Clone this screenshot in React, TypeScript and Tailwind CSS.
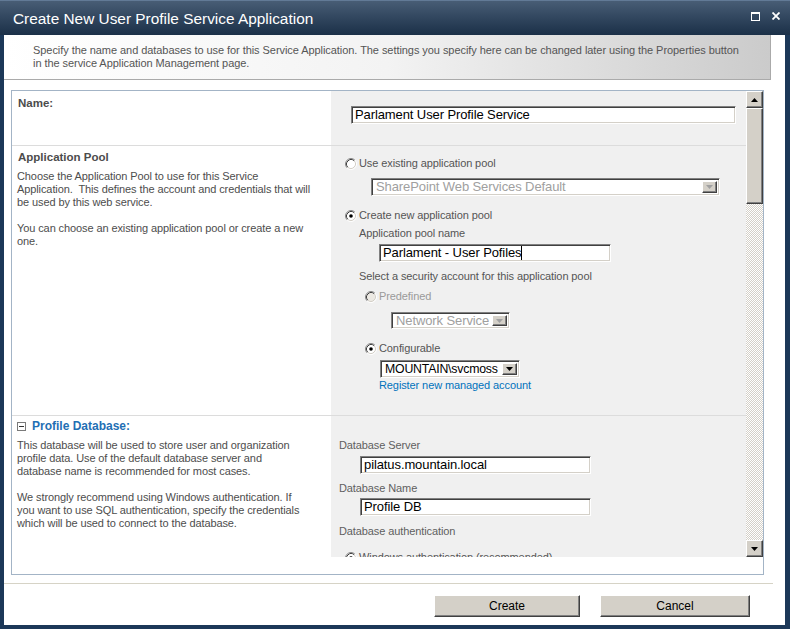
import React from "react";

const sans = "font-['Liberation_Sans',Arial,sans-serif]";

function Radio({ checked = false, disabled = false }: { checked?: boolean; disabled?: boolean }) {
  return (
    <svg width="12" height="12" viewBox="0 0 12 12" className="shrink-0">
      <circle cx="6" cy="6" r="4.5" fill={disabled ? "#ece9e3" : "#ffffff"} />
      <path d="M2.11 9.89 A5.5 5.5 0 0 1 9.89 2.11" fill="none" stroke="#8a8a8a" strokeWidth="1" />
      <path d="M9.89 2.11 A5.5 5.5 0 0 1 2.11 9.89" fill="none" stroke="#ffffff" strokeWidth="1" />
      <path d="M2.82 9.18 A4.5 4.5 0 0 1 9.18 2.82" fill="none" stroke="#404040" strokeWidth="1" />
      <path d="M9.18 2.82 A4.5 4.5 0 0 1 2.82 9.18" fill="none" stroke="#d4d0c8" strokeWidth="1" />
      {checked && <circle cx="6" cy="6" r="1.8" fill={disabled ? "#8a8a8a" : "#000000"} />}
    </svg>
  );
}

function ArrowDown({ color = "#000" }: { color?: string }) {
  return (
    <svg width="7" height="4" viewBox="0 0 7 4">
      <path d="M0 0 H7 L3.5 4 Z" fill={color} />
    </svg>
  );
}

function ArrowUp({ color = "#000" }: { color?: string }) {
  return (
    <svg width="7" height="4" viewBox="0 0 7 4">
      <path d="M0 4 H7 L3.5 0 Z" fill={color} />
    </svg>
  );
}

const inset =
  "border border-t-[#808080] border-l-[#808080] border-b-white border-r-white shadow-[inset_1px_1px_#404040,inset_-1px_-1px_#d4d0c8]";
const raised =
  "border border-t-white border-l-white border-b-[#404040] border-r-[#404040] shadow-[inset_-1px_-1px_#808080] bg-[#d4d0c8]";

function TextBox({ value, className, caret = false }: { value: string; className: string; caret?: boolean }) {
  return (
    <div className={`${inset} bg-white flex items-center pl-[3px] text-[13px] leading-[14px] text-black ${className}`}>
      <span className="whitespace-nowrap">{value}</span>
      {caret && <span className="w-px h-[14px] bg-black" />}
    </div>
  );
}

function Select({
  value,
  className,
  textClass = "",
  disabled = false,
}: {
  value: string;
  className: string;
  textClass?: string;
  disabled?: boolean;
}) {
  return (
    <div className={`${inset} bg-white flex items-stretch p-[2px] text-[13px] leading-[14px] ${className}`}>
      <span
        className={`flex-1 flex items-center pl-[2px] whitespace-nowrap ${
          disabled ? "text-[#a0a0a0]" : "text-black"
        } ${textClass}`}
      >
        {value}
      </span>
      <span className={`${raised} w-[15px] shrink-0 flex items-center justify-center`}>
        <ArrowDown color={disabled ? "#a0a0a0" : "#000"} />
      </span>
    </div>
  );
}

function Scrollbar() {
  return (
    <div className="w-[17px] h-full flex flex-col">
      <div className={`${raised} h-[17px] flex items-center justify-center`}>
        <ArrowUp />
      </div>
      <div className={`${raised} h-[96px]`} />
      <div className="flex-1 bg-[image:repeating-conic-gradient(#d4d0c8_0%_25%,#ffffff_0%_50%)] bg-[length:2px_2px]" />
      <div className={`${raised} h-[17px] flex items-center justify-center`}>
        <ArrowDown />
      </div>
    </div>
  );
}

export default function App() {
  return (
    <div className={`w-[790px] h-[629px] bg-[#1c3858] flex flex-col overflow-hidden ${sans}`}>
      {/* window caption */}
      <div className="h-[35px] shrink-0 flex items-center pl-[13px] pr-[10px] bg-gradient-to-b from-[#485d75] to-[#1b3048] border-t border-[#627a96]">
        <span className="text-white text-[15.4px] leading-none pt-[1px]">Create New User Profile Service Application</span>
        <div className="ml-auto flex items-center gap-[12px] pb-[4px]">
          <svg width="9" height="9" viewBox="0 0 9 9">
            <rect x="0.5" y="0.5" width="8" height="8" fill="none" stroke="#fff" />
            <rect x="0" y="0" width="9" height="2" fill="#fff" />
          </svg>
          <svg width="8" height="8" viewBox="0 0 8 8">
            <path d="M0.5 0.5 L7.5 7.5 M7.5 0.5 L0.5 7.5" stroke="#fff" strokeWidth="1.8" />
          </svg>
        </div>
      </div>

      {/* dialog body */}
      <div className="flex-1 ml-[4px] mr-[5px] mb-[4px] bg-white flex flex-col">
        <div className="h-[45px] w-[767px] shrink-0 border-r border-b border-[#aaaaaa] bg-gradient-to-r from-white via-[#f3f3f3] to-[#cbcbcb] pl-[29px] pt-[9px] text-[11px] leading-[13px] text-[#555555] tracking-[-0.06px]">
          <div className="whitespace-nowrap">
            Specify the name and databases to use for this Service Application. The settings you specify here can be changed later using the Properties button
          </div>
          <div className="whitespace-nowrap">in the service Application Management page.</div>
        </div>

        <div className="mt-[10px] ml-[7px] w-[753px] h-[485px] shrink-0 border border-[#a3b4c6] flex flex-col">
          <div className="flex h-[466px]">
            <div className="w-[734px] h-full overflow-hidden text-[11px] leading-[13px] tracking-[-0.1px]">
              {/* Name */}
              <div className="grid grid-cols-[319px_415px] border-b border-[#dcdcdc]">
                <div className="bg-white pl-[6px] pt-[6px] h-[54px]">
                  <span className="font-bold text-[11.5px] text-[#4c4c4c] tracking-normal">Name:</span>
                </div>
                <div className="bg-[#f0f0f0] pl-[20px] pt-[15px]">
                  <TextBox value="Parlament User Profile Service" className="w-[385px] h-[18px]" />
                </div>
              </div>

              {/* Application pool */}
              <div className="grid grid-cols-[319px_415px] border-b border-[#dcdcdc]">
                <div className="bg-white pl-[6px] pt-[5px]">
                  <div className="font-bold text-[11.5px] text-[#4c4c4c] tracking-normal">Application Pool</div>
                  <div className="mt-[6px] -ml-px text-[#4d4d4d] whitespace-nowrap">
                    <div>Choose the Application Pool to use for this Service</div>
                    <div>Application.&nbsp; This defines the account and credentials that will</div>
                    <div>be used by this web service.</div>
                    <div className="mt-[13px]">You can choose an existing application pool or create a new</div>
                    <div>one.</div>
                  </div>
                </div>
                <div className="bg-[#f0f0f0] pl-[14px] pt-[11px] pb-[23px] text-[#555555]">
                  <div className="flex items-center gap-[2px] h-[13px]">
                    <Radio />
                    <span>Use existing application pool</span>
                  </div>
                  <Select value="SharePoint Web Services Default" disabled className="mt-[8px] ml-[26px] w-[349px] h-[18px]" />
                  <div className="mt-[13px] flex items-center gap-[2px] h-[13px]">
                    <Radio checked />
                    <span>Create new application pool</span>
                  </div>
                  <div className="mt-[5px] ml-[14px]">Application pool name</div>
                  <TextBox value="Parlament - User Pofiles" caret className="mt-[4px] ml-[34px] w-[232px] h-[18px]" />
                  <div className="mt-[8px] ml-[14px]">Select a security account for this application pool</div>
                  <div className="mt-[7px] ml-[20px] flex items-center gap-[2px] h-[13px] text-[#9a9a9a]">
                    <Radio disabled />
                    <span>Predefined</span>
                  </div>
                  <Select value="Network Service" disabled className="mt-[9px] ml-[46px] w-[119px] h-[17px]" />
                  <div className="mt-[13px] ml-[20px] flex items-center gap-[2px] h-[13px]">
                    <Radio checked />
                    <span>Configurable</span>
                  </div>
                  <Select
                    value="MOUNTAIN\svcmoss"
                    textClass="text-[12.3px] tracking-[-0.2px]"
                    className="mt-[5px] ml-[35px] w-[140px] h-[18px]"
                  />
                  <div className="mt-px ml-[34px] text-[#0072bc]">Register new managed account</div>
                </div>
              </div>

              {/* Profile database */}
              <div className="grid grid-cols-[319px_415px]">
                <div className="bg-white pl-[5px] pt-[4px] h-[200px]">
                  <div className="flex items-center gap-[6px] h-[13px]">
                    <svg width="9" height="9" viewBox="0 0 9 9">
                      <rect x="0.5" y="0.5" width="8" height="8" fill="#fff" stroke="#7a7a7a" />
                      <path d="M2 4.5 H7" stroke="#333" strokeWidth="1" />
                    </svg>
                    <span className="font-bold text-[12px] text-[#1f6fb4] tracking-normal">Profile Database:</span>
                  </div>
                  <div className="mt-[6px] text-[#4d4d4d] whitespace-nowrap">
                    <div>This database will be used to store user and organization</div>
                    <div>profile data. Use of the default database server and</div>
                    <div>database name is recommended for most cases.</div>
                    <div className="mt-[13px]">We strongly recommend using Windows authentication. If</div>
                    <div>you want to use SQL authentication, specify the credentials</div>
                    <div>which will be used to connect to the database.</div>
                  </div>
                </div>
                <div className="bg-[#f0f0f0] pl-[8px] pt-[23px] text-[#5f5f5f]">
                  <div>Database Server</div>
                  <TextBox value="pilatus.mountain.local" className="mt-[4px] ml-[21px] w-[231px] h-[18px]" />
                  <div className="mt-[8px]">Database Name</div>
                  <TextBox value="Profile DB" className="mt-[3px] ml-[21px] w-[231px] h-[18px]" />
                  <div className="mt-[9px]">Database authentication</div>
                  <div className="mt-[13px] ml-[6px] flex items-center gap-[2px] h-[13px] text-[#555555]">
                    <Radio checked />
                    <span>Windows authentication (recommended)</span>
                  </div>
                </div>
              </div>
            </div>
            <Scrollbar />
          </div>
        </div>

        <div className="mt-[8px] w-[769px] h-px bg-[#d6d3c6]" />
        <div className="mt-[11px] flex justify-end gap-[20px] pr-[35px]">
          <button className={`${raised} w-[146px] h-[22px] text-[12px] text-black`}>Create</button>
          <button className={`${raised} w-[150px] h-[22px] text-[12px] text-black`}>Cancel</button>
        </div>
      </div>
    </div>
  );
}
